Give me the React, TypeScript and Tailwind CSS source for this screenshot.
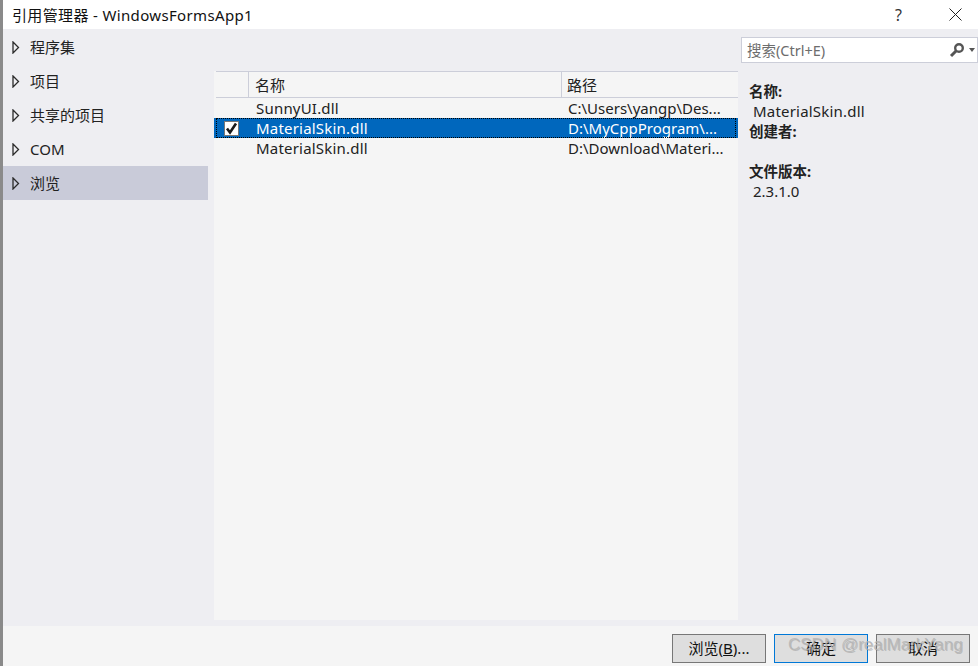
import React from 'react';

const font = 'font-["Noto_Sans","Noto_Sans_CJK_SC",sans-serif]';

const navItems = ['程序集', '项目', '共享的项目', 'COM', '浏览'];

const rows = [
  { name: 'SunnyUI.dll', path: 'C:\\Users\\yangp\\Des...', checked: false },
  { name: 'MaterialSkin.dll', path: 'D:\\MyCppProgram\\...', checked: true },
  { name: 'MaterialSkin.dll', path: 'D:\\Download\\Materi...', checked: false },
];

const Caret = () => (
  <svg width="8" height="13" viewBox="0 0 8 13" className="shrink-0">
    <path d="M1 1 L6.5 6.5 L1 12 Z" fill="none" stroke="#2a2a2a" strokeWidth="1.3" />
  </svg>
);

const NavItem: React.FC<{ label: string; selected: boolean }> = ({ label, selected }) => (
  <div className={`flex h-[34px] items-center pl-[9px] ${selected ? 'bg-[#c9cbd9]' : ''}`}>
    <Caret />
    <span className="ml-[10px] text-[15px] leading-[20px] text-[#222]">{label}</span>
  </div>
);

const Row: React.FC<{ name: string; path: string; checked: boolean }> = ({ name, path, checked }) => (
  <div
    className={`relative flex h-5 items-center text-[15px] leading-5 ${
      checked ? 'bg-[#0067bd] text-white' : 'text-[#222]'
    }`}
  >
    {checked && (
      <div className="absolute inset-x-[2px] inset-y-0 border border-dotted border-[#000]" />
    )}
    <div className="flex w-[35px] justify-center pr-[1px]">
      {checked && (
        <div className="relative z-10 flex h-[15px] w-[15px] items-center justify-center border border-[#777] bg-white">
          <svg width="13" height="13" viewBox="0 0 13 13">
            <path d="M2 6.5 L5 10.5 L11 1.5" fill="none" stroke="#1a1a1a" strokeWidth="2.6" />
          </svg>
        </div>
      )}
    </div>
    <div className="w-[313px] pl-[7px] tracking-[0.2px]">{name}</div>
    <div className="pl-[6px] whitespace-nowrap">{path}</div>
  </div>
);

const FooterButton: React.FC<{ children: React.ReactNode; primary?: boolean }> = ({ children, primary }) => (
  <button
    className={`h-[29px] w-[94px] border bg-[#dedede] text-[15px] text-[#111] ${
      primary ? 'border-[#0078d7]' : 'border-[#777]'
    }`}
  >
    {children}
  </button>
);

export default function App() {
  return (
    <div className={`relative flex h-[666px] w-[978px] overflow-hidden border-l-[3px] border-[#8a8a8a] bg-white ${font}`}>
      <div className="absolute left-[-3px] top-[71px] h-6 w-[3px] bg-[#0067bd]" />
      <div className="flex min-w-0 flex-1 flex-col">
        <div className="flex h-[29px] items-center justify-between bg-white">
          <span className="ml-[9px] text-[15px] leading-5 tracking-[0.35px] text-[#111]">
            引用管理器 - WindowsFormsApp1
          </span>
          <div className="flex items-center">
            <span className="mr-[47px] text-[16px] leading-5 text-[#333]">?</span>
            <svg width="13" height="13" viewBox="0 0 13 13" className="mr-[16px]">
              <path d="M0.5 0.5 L12.5 12.5 M12.5 0.5 L0.5 12.5" stroke="#222" strokeWidth="1" />
            </svg>
          </div>
        </div>

        <div className="flex h-[597px] bg-[#eeeef2]">
          <div className="w-[205px] pt-px">
            {navItems.map((item, i) => (
              <NavItem key={item} label={item} selected={i === 4} />
            ))}
          </div>

          <div className="ml-[6px] mt-[42px] h-[549px] w-[524px] bg-[#f5f5f5]">
            <div className="ml-[2px] flex h-[27px] border-y border-[#ccced9] text-[15px] text-[#222]">
              <div className="w-[33px] border-r border-[#ccced9]" />
              <div className="w-[313px] border-r border-[#ccced9] pl-[6px] leading-[26px]">名称</div>
              <div className="pl-[5px] leading-[26px]">路径</div>
            </div>
            {rows.map((row, i) => (
              <Row key={i} {...row} />
            ))}
          </div>

          <div className="ml-[3px] flex-1 pt-2">
            <div className="flex h-[26px] items-center border border-[#ccced9] bg-white pl-[5px] pr-[2px]">
              <span className="flex-1 text-[14.5px] leading-5 text-[#6d6d6d]">搜索(Ctrl+E)</span>
              <svg width="16" height="16" viewBox="0 0 16 16" className="mr-[4px]">
                <circle cx="10" cy="6" r="3.8" fill="none" stroke="#555" strokeWidth="2.4" />
                <path d="M7 9 L2 14" stroke="#555" strokeWidth="3" />
              </svg>
              <div className="h-0 w-0 border-x-[3.5px] border-t-4 border-x-transparent border-t-[#555]" />
            </div>
            <div className="ml-[8px] mt-[18px] text-[14.5px] leading-5 text-[#222]">
              <div className="font-bold">名称:</div>
              <div className="pl-1 text-[15px] tracking-[0.2px]">MaterialSkin.dll</div>
              <div className="font-bold">创建者:</div>
              <div className="h-5" />
              <div className="font-bold">文件版本:</div>
              <div className="pl-1 text-[15px]">2.3.1.0</div>
            </div>
          </div>
        </div>

        <div className="flex h-10 items-start justify-end gap-2 bg-[#f5f5f5] pr-2 pt-2">
          <FooterButton>
            浏览(<span className="underline">B</span>)...
          </FooterButton>
          <FooterButton primary>确定</FooterButton>
          <FooterButton>取消</FooterButton>
        </div>
      </div>

      <div className="pointer-events-none absolute left-[785px] top-[635px] font-['Liberation_Sans'] text-[17px] leading-5 whitespace-nowrap text-[#b5b5b5]/85 [text-shadow:1px_1px_0_rgba(120,120,120,0.35)]">
        CSDN @realMarkYang
      </div>
    </div>
  );
}
